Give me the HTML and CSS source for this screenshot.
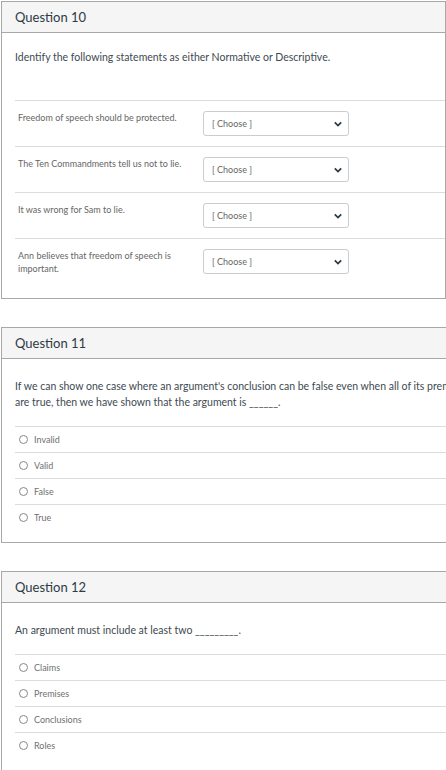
FILE: index.html
```html
<!DOCTYPE html>
<html lang="en">
<head>
  <meta charset="UTF-8">
  <meta name="viewport" content="width=device-width, initial-scale=1.0">
  <title>Quiz</title>
  <link rel="stylesheet" href="styles.css">
</head>
<body>

  <div class="quiz">

    <div class="question question-matching">
      <div class="question-header">Question 10</div>
      <div class="question-body">
        <p class="question-text">Identify the following statements as either Normative or Descriptive.</p>
        <div class="answers">
          <div class="match-row">
            <div class="match-label">Freedom of speech should be protected.</div>
            <div class="select">[ Choose ]<svg class="chevron" viewBox="0 0 10 6"><polyline points="1,1 5,5 9,1"/></svg></div>
          </div>
          <div class="match-row">
            <div class="match-label">The Ten Commandments tell us not to lie.</div>
            <div class="select">[ Choose ]<svg class="chevron" viewBox="0 0 10 6"><polyline points="1,1 5,5 9,1"/></svg></div>
          </div>
          <div class="match-row">
            <div class="match-label">It was wrong for Sam to lie.</div>
            <div class="select">[ Choose ]<svg class="chevron" viewBox="0 0 10 6"><polyline points="1,1 5,5 9,1"/></svg></div>
          </div>
          <div class="match-row">
            <div class="match-label">Ann believes that freedom of speech is important.</div>
            <div class="select">[ Choose ]<svg class="chevron" viewBox="0 0 10 6"><polyline points="1,1 5,5 9,1"/></svg></div>
          </div>
        </div>
      </div>
    </div>

    <div class="question question-wide">
      <div class="question-header">Question 11</div>
      <div class="question-body">
        <p class="question-text">If we can show one case where an argument's conclusion can be false even when all of its premises are true, then we have shown that the argument is ______.</p>
        <div class="answers">
          <label class="option"><span class="radio"></span>Invalid</label>
          <label class="option"><span class="radio"></span>Valid</label>
          <label class="option"><span class="radio"></span>False</label>
          <label class="option"><span class="radio"></span>True</label>
        </div>
      </div>
    </div>

    <div class="question question-wide">
      <div class="question-header">Question 12</div>
      <div class="question-body">
        <p class="question-text">An argument must include at least two _________.</p>
        <div class="answers">
          <label class="option"><span class="radio"></span>Claims</label>
          <label class="option"><span class="radio"></span>Premises</label>
          <label class="option"><span class="radio"></span>Conclusions</label>
          <label class="option"><span class="radio"></span>Roles</label>
        </div>
      </div>
    </div>

  </div>

</body>
</html>
```

FILE: styles.css
```css
html, body {
  overflow: hidden;
}

body {
  margin: 0;
  background-color: #fff;
  font-family: Lato, "Liberation Sans", sans-serif;
  color: #2d3b45;
}

.quiz {
  padding: 1px 0 0 1px;
  display: flex;
  flex-direction: column;
  gap: 28px;
}

.question {
  box-sizing: border-box;
  border: 1px solid #a8a8a8;
  flex-shrink: 0;
}

.question-matching {
  width: 445px;
}

.question-wide {
  width: 520px;
}

.question-header {
  height: 30px;
  line-height: 30px;
  padding: 0 13px;
  background-color: #f5f5f5;
  border-bottom: 1px solid #a8a8a8;
  font-size: 13px;
}

.question-body {
  padding: 19px 0 12px 13px;
}

.question-text {
  max-width: 462px;
  margin: 0 0 16px;
  font-size: 10.5px;
  line-height: 16px;
  color: #404a52;
}

.question-matching .question-body {
  padding: 16px 0 14px 13px;
}

.question-matching .question-text {
  margin-bottom: 35px;
}

.answers > * {
  border-top: 1px solid #dcdcdc;
}

.match-row {
  display: flex;
  align-items: flex-start;
  height: 45px;
  padding-left: 3px;
}

.match-label {
  width: 180px;
  margin-top: 10px;
  font-size: 9px;
  line-height: 13px;
  color: #666;
}

.select {
  box-sizing: border-box;
  display: flex;
  align-items: center;
  justify-content: space-between;
  width: 146px;
  height: 25px;
  margin: 10px 0 0 5px;
  padding: 0 6px 0 8px;
  border: 1px solid #c7cdd1;
  border-radius: 3px;
  font-size: 9px;
  color: #666;
}

.chevron {
  width: 8px;
  height: 6px;
  fill: none;
  stroke: #2d3b45;
  stroke-width: 2.2;
}

.option {
  display: flex;
  align-items: center;
  height: 25px;
  padding-left: 4px;
  font-size: 9px;
  color: #707070;
}

.radio {
  box-sizing: border-box;
  width: 9px;
  height: 9px;
  margin-right: 6px;
  border: 1px solid #888;
  border-radius: 50%;
}
```
